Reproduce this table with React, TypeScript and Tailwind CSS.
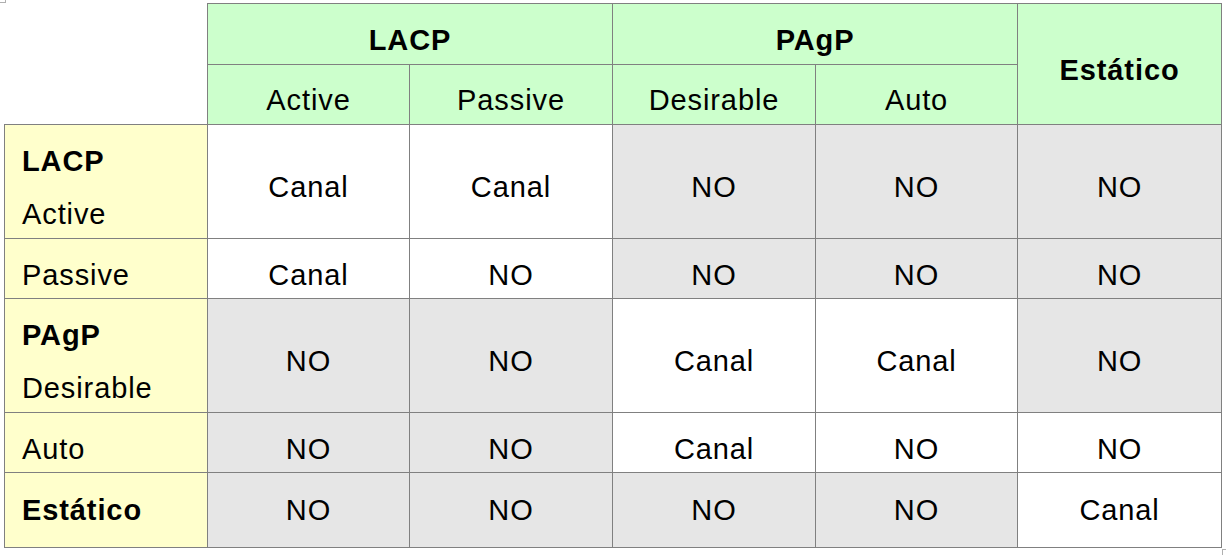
import React from "react";

type Cell = { t: string; g: boolean };

const rows: { head: React.ReactNode; h: string; pt: string; cells: Cell[] }[] = [
  {
    head: (
      <div className="flex flex-col gap-[20px]">
        <span className="font-bold">LACP</span>
        <span>Active</span>
      </div>
    ),
    h: "h-[114px]",
    pt: "pt-[12px]",
    cells: [
      { t: "Canal", g: false },
      { t: "Canal", g: false },
      { t: "NO", g: true },
      { t: "NO", g: true },
      { t: "NO", g: true },
    ],
  },
  {
    head: <span>Passive</span>,
    h: "h-[60px]",
    pt: "pt-[13px]",
    cells: [
      { t: "Canal", g: false },
      { t: "NO", g: false },
      { t: "NO", g: true },
      { t: "NO", g: true },
      { t: "NO", g: true },
    ],
  },
  {
    head: (
      <div className="flex flex-col gap-[20px]">
        <span className="font-bold">PAgP</span>
        <span>Desirable</span>
      </div>
    ),
    h: "h-[114px]",
    pt: "pt-[12px]",
    cells: [
      { t: "NO", g: true },
      { t: "NO", g: true },
      { t: "Canal", g: false },
      { t: "Canal", g: false },
      { t: "NO", g: true },
    ],
  },
  {
    head: <span>Auto</span>,
    h: "h-[60px]",
    pt: "pt-[13px]",
    cells: [
      { t: "NO", g: true },
      { t: "NO", g: true },
      { t: "Canal", g: false },
      { t: "NO", g: false },
      { t: "NO", g: false },
    ],
  },
  {
    head: <span className="font-bold">Estático</span>,
    h: "h-[75px]",
    pt: "pt-0",
    cells: [
      { t: "NO", g: true },
      { t: "NO", g: true },
      { t: "NO", g: true },
      { t: "NO", g: true },
      { t: "Canal", g: false },
    ],
  },
];

export default function App() {
  return (
    <div
      className="relative w-[1226px] h-[555px] bg-white text-black pl-[4px] pt-[3px] text-[29px] leading-[33px] tracking-[0.9px]"
      style={{ fontFamily: '"Liberation Sans", Arial, sans-serif' }}
    >
      <div className="absolute left-0 top-[2px] w-[5px] h-px bg-[#b0b0b0]" />
      <div className="absolute left-[5px] top-0 w-px h-[3px] bg-[#b0b0b0]" />
      <div className="absolute left-[1222px] top-[549px] w-px h-[6px] bg-[#b0b0b0]" />
      <div className="absolute left-[1222px] top-[549px] w-[4px] h-px bg-[#b0b0b0]" />
      <table className="table-fixed border-collapse w-[1217px]">
        <colgroup>
          <col className="w-[203px]" />
          <col className="w-[202px]" />
          <col className="w-[203px]" />
          <col className="w-[203px]" />
          <col className="w-[202px]" />
          <col className="w-[204px]" />
        </colgroup>
        <thead>
          <tr className="h-[61px]">
            <th rowSpan={2} className="border-0 bg-white" />
            <th
              colSpan={2}
              className="border border-[#808080] bg-[#ccffcc] font-bold text-center align-middle pt-[12px]"
            >
              LACP
            </th>
            <th
              colSpan={2}
              className="border border-[#808080] bg-[#ccffcc] font-bold text-center align-middle pt-[12px]"
            >
              PAgP
            </th>
            <th
              rowSpan={2}
              className="border border-[#808080] bg-[#ccffcc] font-bold text-center align-middle pt-[12px]"
            >
              Estático
            </th>
          </tr>
          <tr className="h-[60px]">
            {["Active", "Passive", "Desirable", "Auto"].map((t) => (
              <th
                key={t}
                className="border border-[#808080] bg-[#ccffcc] font-normal text-center align-middle pt-[12px]"
              >
                {t}
              </th>
            ))}
          </tr>
        </thead>
        <tbody>
          {rows.map((r, i) => (
            <tr key={i} className={r.h}>
              <td
                className={`border border-[#808080] bg-[#ffffcc] text-left align-middle pl-[17px] ${r.pt}`}
              >
                {r.head}
              </td>
              {r.cells.map((c, j) => (
                <td
                  key={j}
                  className={`border border-[#808080] text-center align-middle ${r.pt} ${
                    c.g ? "bg-[#e6e6e6]" : "bg-white"
                  }`}
                >
                  {c.t}
                </td>
              ))}
            </tr>
          ))}
        </tbody>
      </table>
    </div>
  );
}
